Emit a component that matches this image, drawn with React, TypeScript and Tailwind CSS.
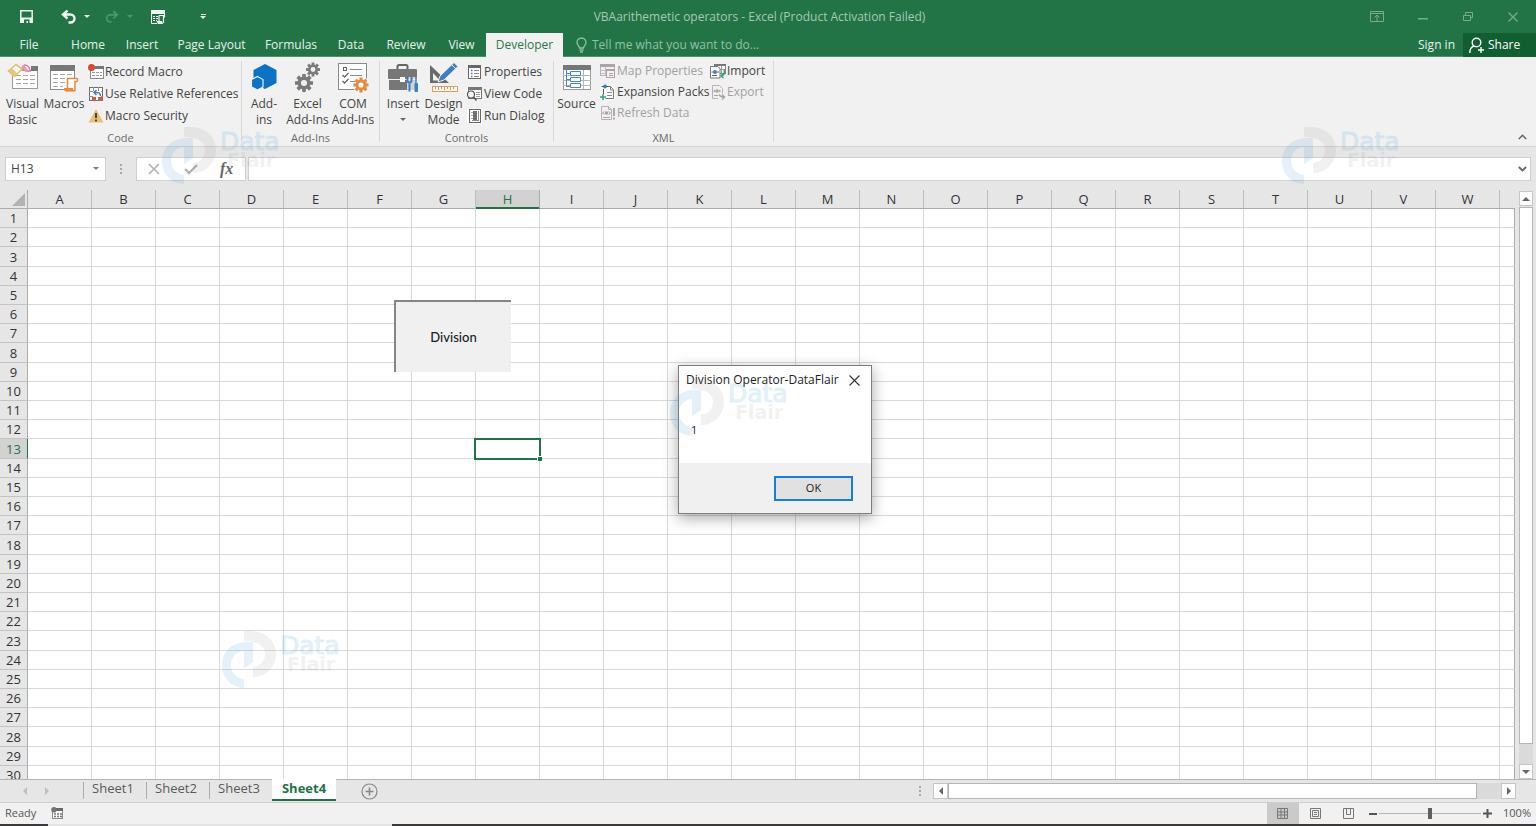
import { useState, type ReactNode } from 'react'
import clsx from 'clsx'

const COLUMNS = 'ABCDEFGHIJKLMNOPQRSTUVW'.split('')
const ROWS = Array.from({ length: 30 }, (_, i) => i + 1)
const SHEETS = ['Sheet1', 'Sheet2', 'Sheet3', 'Sheet4']

const TABS = [
  { name: 'Home', width: 'w-14' },
  { name: 'Insert', width: 'w-[52px]' },
  { name: 'Page Layout', width: 'w-[87px]' },
  { name: 'Formulas', width: 'w-[72px]' },
  { name: 'Data', width: 'w-12' },
  { name: 'Review', width: 'w-[62px]' },
  { name: 'View', width: 'w-[49px]' },
  { name: 'Developer', width: 'w-[77px]' },
]

/* ---------- large ribbon icons (32x32) ---------- */

function Svg32({ children }: { children: ReactNode }) {
  return (
    <svg width="32" height="32" viewBox="0 0 32 32" fill="none" aria-hidden="true">
      {children}
    </svg>
  )
}

function Cog({ cx, cy, r, color, hole }: { cx: number; cy: number; r: number; color: string; hole: string }) {
  return (
    <g transform={`translate(${cx} ${cy})`}>
      {[0, 45, 90, 135].map((a) => (
        <rect key={a} x={-r * 0.2} y={-r} width={r * 0.4} height={r * 2} fill={color} transform={`rotate(${a})`} />
      ))}
      <circle r={r * 0.72} fill={color} />
      <circle r={r * 0.34} fill={hole} />
    </g>
  )
}

const VisualBasicIcon = () => (
  <Svg32>
    <rect x="5.500" y="9.500" width="25" height="18" fill="#fff" stroke="#9a9a9a" />
    <rect x="24" y="5" width="7" height="5" fill="#777" />
    <path d="M9 14.500h5m2 0h5m2 0h5M9 18.500h5m2 0h5m2 0h5M9 22.500h5m2 0h5m2 0h5" stroke="#a8a8a8" />
    <path d="M9 3.500l6 4.500-7.500 7.500-6-5.500z" fill="#fff" stroke="#e5bd6b" strokeWidth="1.600" />
    <path d="M1.500 10l3-3 6 5.500-3 3z" fill="#e9c47a" />
    <path d="M17.500 4c3.500 0 5 2 5.500 6-4 .5-7-1-7.500-4z" fill="#fff" stroke="#e67f9b" strokeWidth="1.600" />
    <path d="M17 4l-2 2.500 5 4.500 1-2z" fill="#ee9ab0" />
  </Svg32>
)

const MacrosIcon = () => (
  <Svg32>
    <rect x="2.500" y="4.500" width="24" height="24" fill="#fff" stroke="#8a8a8a" />
    <rect x="2" y="4" width="25" height="6" fill="#777" />
    <path d="M5 13.500h5m2 0h5m2 0h5M5 17.500h5m2 0h5M5 21.500h5m2 0h5M5 25.500h5m2 0h3" stroke="#a8a8a8" />
    <path d="M19.500 17.500h9c1.500 0 1.500 3 0 3H27v9H18c1.500 0 1.500-1 1.500-3z" fill="#fff" stroke="#e8893e" strokeWidth="1.500" />
    <path d="M16 27h9v1.500c0 1 .5 2 2 2H18c-1.500 0-2-1.500-2-3.500z" fill="#e8893e" />
  </Svg32>
)

const AddInsIcon = () => (
  <Svg32>
    <path d="M17 3l11.500 6v13L17 28 5.500 22V9z" fill="#0b72c5" />
    <path d="M9.500 15.500l5.500 3v7.500l-5.500 3-6-3v-7.500z" fill="#0b72c5" stroke="#f1f1f1" strokeWidth="1.200" />
  </Svg32>
)

const ExcelAddInsIcon = () => (
  <Svg32>
    <Cog cx={21} cy={8.5} r={7} color="#7a7a7a" hole="#f1f1f1" />
    <Cog cx={12} cy={22} r={9} color="#7a7a7a" hole="#f1f1f1" />
  </Svg32>
)

const ComAddInsIcon = () => (
  <Svg32>
    <rect x="1.500" y="2.500" width="28" height="26" fill="#fff" stroke="#8a8a8a" />
    <path d="M13 8.500h12M13 14.500h12M13 20.500h6" stroke="#8a8a8a" />
    <rect x="6.500" y="6.500" width="3" height="3" stroke="#666" />
    <path d="M5.500 14l2 2 4-4M5.500 20l2 2 4-4" stroke="#666" strokeWidth="1.300" />
    <Cog cx={24} cy={24} r={8.5} color="#f1f1f1" hole="#f1f1f1" />
    <Cog cx={24} cy={24} r={7.5} color="#e8893e" hole="#fff" />
  </Svg32>
)

const InsertIcon = () => (
  <Svg32>
    <path d="M10.500 8V5.500q0-1.500 1.500-1.500h7q1.500 0 1.500 1.500V8" stroke="#666" strokeWidth="2" />
    <rect x="1" y="8" width="29" height="10" rx="1" fill="#777" />
    <rect x="2" y="19" width="27" height="10" fill="#777" />
    <rect x="13" y="16" width="5" height="5" fill="#fff" />
    <path d="M20 16h12v15H20z" fill="#f1f1f1" opacity=".75" />
    <path d="M20.500 16v3.500q0 2 2 2t2-2V16M22.500 21v9.500" stroke="#3f7fc0" strokeWidth="2" />
    <path d="M29 16v7" stroke="#3f7fc0" strokeWidth="1.500" />
    <rect x="27.500" y="22" width="3.500" height="9" rx="1" fill="#3f7fc0" />
  </Svg32>
)

const DesignModeIcon = () => (
  <Svg32>
    <path d="M2 4v18h19zM5 12l7 7.500H5z" fill="#6a6a6a" fillRule="evenodd" />
    <path d="M10 21l2-6L26 1.500l4 4L16 19z" fill="#3f7fc0" stroke="#f1f1f1" />
    <path d="M24 4l4 4" stroke="#f1f1f1" />
    <rect x="4.500" y="25.500" width="25" height="5" fill="#fff" stroke="#e59a5e" />
    <path d="M7.500 26v2m3-2v3m3-3v2m3-2v3m3-3v2m3-2v3m3-3v2" stroke="#e59a5e" />
  </Svg32>
)

const SourceIcon = () => (
  <Svg32>
    <rect x="2.500" y="4.500" width="27" height="24" fill="#fff" stroke="#9a9a9a" />
    <path d="M2 14.500h28M2 19.500h28M2 24.500h28M22.500 9v19" stroke="#b5b5b5" />
    <rect x="2" y="4" width="28" height="5" fill="#777" />
    <path d="M5.500 5v20.500H10M5.500 12.500H10M5.500 18.500H10" stroke="#4b86c4" />
    <path d="M9.500 10.500h10v4h-10zM9.500 16.500h10v4h-10zM9.500 22.500h10v4h-10z" fill="#fff" stroke="#4b86c4" />
  </Svg32>
)

/* ---------- small ribbon icons (16x16) ---------- */

function Svg16({ children }: { children: ReactNode }) {
  return (
    <svg width="16" height="16" viewBox="0 0 16 16" fill="none" aria-hidden="true" className="shrink-0">
      {children}
    </svg>
  )
}

const RecordIcon = () => (
  <Svg16>
    <rect x="2.500" y="2.500" width="13" height="12" fill="#fff" stroke="#8a8a8a" />
    <rect x="7" y="2" width="9" height="3" fill="#777" />
    <path d="M4 8.500h3m1 0h3m1 0h2M4 11.500h3m1 0h3m1 0h2" stroke="#9a9a9a" />
    <circle cx="3.500" cy="3.500" r="3.500" fill="#d9482b" />
  </Svg16>
)

const RelativeIcon = () => (
  <Svg16>
    <rect x="1.500" y="1.500" width="13" height="13" fill="#fff" stroke="#6f6f6f" />
    <path d="M1 5.500h14M1 10.500h14M5.500 1v14M10.500 1v14" stroke="#8a8a8a" />
    <rect x="5" y="5" width="8" height="6" fill="#fff" />
    <path d="M12.500 10c0-3-2-4-6-3.500M8.500 4L6 6.500 8.500 9" stroke="#3f7fc0" strokeWidth="1.500" />
    <rect x="4" y="11" width="4" height="4" fill="#d9583c" />
    <rect x="11" y="11" width="4" height="4" fill="#d9583c" />
  </Svg16>
)

const SecurityIcon = () => (
  <Svg16>
    <path d="M8 1l7.500 13.500H.5z" fill="#eabf74" />
    <path d="M8 5v5M8 11.500v2" stroke="#444" strokeWidth="2" />
  </Svg16>
)

const PropertiesIcon = () => (
  <Svg16>
    <rect x="1.500" y="1.500" width="12" height="13" fill="#fff" stroke="#666" />
    <rect x="1" y="1" width="13" height="3" fill="#666" />
    <path d="M4 6.500h1.500M4 9.500h1.500M4 12.500h1.500" stroke="#3f7fc0" strokeWidth="1.500" />
    <path d="M7 6.500h5M7 9.500h5M7 12.500h5" stroke="#8a8a8a" />
  </Svg16>
)

const ViewCodeIcon = () => (
  <Svg16>
    <rect x="1.500" y="1.500" width="13" height="11" fill="#fff" stroke="#777" />
    <rect x="1" y="1" width="14" height="3" fill="#777" />
    <path d="M9 6.500h4M9 8.500h4M9 10.500h4" stroke="#9a9a9a" />
    <circle cx="4" cy="8.500" r="3.500" fill="#f6f6f6" stroke="#555" strokeWidth="1.200" />
    <path d="M6.500 11l3 3.500" stroke="#555" strokeWidth="1.500" />
  </Svg16>
)

const RunDialogIcon = () => (
  <Svg16>
    <rect width="15" height="16" fill="#fff" />
    <rect x="2.500" y="1.500" width="11" height="13" fill="#fff" stroke="#666" />
    <path d="M4 4.500h3M4 7.500h2M4 10.500h2" stroke="#aaa" />
    <rect x="6" y="3" width="4" height="9" fill="#6f6f6f" />
    <path d="M5 12.500h7M11.500 3v9" stroke="#8a8a8a" />
  </Svg16>
)

const MapPropertiesIcon = () => (
  <Svg16>
    <rect x=".5" y="1.500" width="14" height="11" fill="#f5eff4" stroke="#b9b1b7" />
    <rect y="1" width="15" height="3" fill="#aaa4a8" />
    <path d="M1 7.500h6M1 10.500h6M5.500 4v8" stroke="#c5bdc3" />
    <rect x="6.500" y="6.500" width="8" height="8" fill="#f5eff4" stroke="#aaa4a8" />
    <path d="M6 7.500h9M9 10.500h4M9 12.500h4" stroke="#aaa4a8" />
  </Svg16>
)

const ExpansionIcon = () => (
  <Svg16>
    <rect width="15" height="16" fill="#fbfbfb" />
    <path d="M4.500 2.500h6l3 3v9h-8" stroke="#777" />
    <path d="M10.500 2v4h3M7 8.500h5M7 11.500h5" stroke="#8a8a8a" />
    <circle cx="5" cy="2.500" r="2" fill="#3f7fc0" />
    <path d="M1.500 2.500h2M6.500 2.500h3M3.500 5v5" stroke="#555" />
    <path d="M3 10v6M0 13h6" stroke="#35a278" strokeWidth="1.500" />
  </Svg16>
)

const RefreshIcon = () => (
  <Svg16>
    <path d="M1.500 1.500h7l3 3v10h-10z" fill="#f5eff4" stroke="#b9b1b7" />
    <path d="M8.500 1.500v3h3" stroke="#b9b1b7" />
    <circle cx="6.500" cy="8" r="1.800" fill="#aaa4a8" />
    <path d="M2.500 8l2-1.500M2.500 8l2 1.500M10.500 8l-2-1.500M10.500 8l-2 1.500M3 12.500h7" stroke="#aaa4a8" />
    <path d="M14 3v8M14 12.500v2" stroke="#a5a5a5" strokeWidth="1.800" />
  </Svg16>
)

const ImportIcon = () => (
  <Svg16>
    <rect x="4.500" y="1.500" width="11" height="9" fill="#fff" stroke="#8a8a8a" />
    <rect x="4" y="1" width="12" height="2" fill="#777" />
    <path d="M11.500 2v8M8 6.500h7" stroke="#9a9a9a" />
    <path d="M.5 3.500h7l2.500 2v9.500H.5z" fill="#fff" stroke="#777" />
    <circle cx="5" cy="9" r="2" fill="#3f7fc0" />
    <path d="M1.500 9h2M7 9h2M2 12.500h5" stroke="#666" />
    <path d="M14 7c1 3 0 5-2.500 6M13.500 10.500L11 13l2.500 2" stroke="#35a278" strokeWidth="1.500" />
  </Svg16>
)

const ExportIcon = () => (
  <Svg16>
    <path d="M2.500 1.500h7l3 3v5M8 14.500H2.500v-13" fill="#f5eff4" stroke="#b9b1b7" />
    <circle cx="7" cy="7" r="1.800" fill="#aaa4a8" />
    <path d="M3.500 7l1.500-1M3.500 7L5 8M10.500 7L9 6M10.500 7L9 8M4 11.500h4" stroke="#aaa4a8" />
    <path d="M9 10.500q1 2.500 5 2.500M12 10.500l2.500 2.500-2.500 2.500" stroke="#a5a5a5" strokeWidth="1.500" />
  </Svg16>
)

/* ---------- ribbon pieces ---------- */

function BigButton({ icon, label, width, menu }: { icon: ReactNode; label: ReactNode; width: string; menu?: boolean }) {
  return (
    <button className={clsx('flex flex-col items-center pt-1 text-center leading-4 whitespace-nowrap', width)}>
      {icon}
      <span className="mt-[3px]">{label}</span>
      {menu && <span className="mt-1.5 border-x-[3px] border-t-[3px] border-x-transparent border-t-[#666]" />}
    </button>
  )
}

function SmallButton({ icon, label, off, short }: { icon: ReactNode; label: string; off?: boolean; short?: boolean }) {
  return (
    <button
      disabled={off}
      className={clsx('flex items-center gap-px whitespace-nowrap', short ? 'h-[21px]' : 'h-[22px]', off && 'text-[#a3a0a2]')}
    >
      {icon}
      {label}
    </button>
  )
}

function Group({ name, width, children }: { name: string; width: string; children: ReactNode }) {
  return (
    <section className={clsx('flex shrink-0 flex-col', width)} aria-label={name}>
      <div className="flex h-[73px] items-start">{children}</div>
      <div className="text-center text-[11px] leading-4 text-[#6b6b6b]">{name}</div>
    </section>
  )
}

const Separator = () => <div className="my-1 w-px shrink-0 bg-[#d8d8d8]" />

function TitleBar() {
  return (
    <header className="flex h-[33px] items-center text-[#a4cab3]">
      <div className="flex flex-1 items-center text-[#f0f6f2]">
        <button aria-label="Save" className="ml-5">
          <svg width="13" height="13" viewBox="0 0 13 13" fill="none">
            <path d="M.8.8h11.400v11.400H.8z" stroke="currentColor" strokeWidth="1.500" />
            <path d="M1 7.500h11v5H1z" fill="currentColor" />
            <path d="M4 9.500h5.500V13H8v-2H6.500v2H4z" fill="#227447" />
          </svg>
        </button>
        <button aria-label="Undo" className="ml-7">
          <svg width="17" height="14" viewBox="0 0 17 14" fill="none">
            <path d="M2 4.500h7.500a4 4 0 0 1 0 8H7.500M6.500.5l-4.500 4 4.500 4" stroke="currentColor" strokeWidth="2.400" />
          </svg>
        </button>
        <span className="ml-1.5 border-x-[3px] border-t-[3px] border-x-transparent border-t-[#f0f6f2]" />
        <button aria-label="Redo" disabled className="ml-3.5 text-[#4e9470]">
          <svg width="15" height="14" viewBox="0 0 17 14" fill="none">
            <path d="M15 4.500H7a4 4 0 0 0 0 8h1.500M10.500.5l4.500 4-4.500 4" stroke="currentColor" strokeWidth="2" />
          </svg>
        </button>
        <span className="ml-2 border-x-[3px] border-t-[3px] border-x-transparent border-t-[#4e9470]" />
        <button aria-label="Form" className="ml-[18px]">
          <svg width="15" height="14" viewBox="0 0 15 14" fill="none">
            <path d="M.5 1v12.500H6M13.500 1v4" stroke="currentColor" />
            <path d="M0 0h14v4H0z" fill="currentColor" />
            <path d="M2 6.500h2M2 8.500h2M2 10.500h2M5 6.500h2M5 8.500h2M5 10.500h1" stroke="currentColor" />
            <path d="M8 5.500h5.500v2M8 5.500v6M12.500 6v7" stroke="currentColor" strokeWidth="1.200" />
            <path d="M5.500 11h5.500l1 3H7z" fill="currentColor" />
          </svg>
        </button>
        <button aria-label="Customize toolbar" className="ml-[34px] flex flex-col items-center gap-px">
          <span className="h-px w-[5px] bg-[#e0ece5]" />
          <span className="border-x-[3px] border-t-[3px] border-x-transparent border-t-[#e0ece5]" />
        </button>
      </div>
      <h1 className="whitespace-nowrap">VBAarithemetic operators - Excel (Product Activation Failed)</h1>
      <div className="flex flex-1 items-center justify-end gap-[33px] pr-[17px] text-[#76ad8d]">
        <button aria-label="Ribbon display options">
          <svg width="14" height="11" viewBox="0 0 14 11" fill="none" stroke="currentColor">
            <path d="M.5.5h13v10H.5zM.5 2.500h13M7 10V4.500M4.500 6.500L7 4l2.500 2.500" />
          </svg>
        </button>
        <button aria-label="Minimize" className="pt-1">
          <svg width="12" height="2" viewBox="0 0 12 2" fill="currentColor">
            <path d="M1 0h10v1.500H1z" />
          </svg>
        </button>
        <button aria-label="Restore">
          <svg width="12" height="11" viewBox="0 0 12 11" fill="none" stroke="currentColor">
            <path d="M1.500 4.500h7v5h-7zM3.500 4V1.500h7v5H9" />
          </svg>
        </button>
        <button aria-label="Close">
          <svg width="12" height="10" viewBox="0 0 12 10" fill="none" stroke="currentColor" strokeWidth="1.300">
            <path d="M1.500.5l9 9m0-9l-9 9" />
          </svg>
        </button>
      </div>
    </header>
  )
}

function TabBar() {
  return (
    <nav className="flex h-6 items-stretch border-b border-[#4d9069] text-[#e6f1ea]">
      <button className="w-[60px] pr-0.5">File</button>
      {TABS.map((t) => (
        <button
          key={t.name}
          className={clsx(
            'shrink-0 whitespace-nowrap',
            t.width,
            t.name === 'Developer' && '-mb-px bg-[#f1f1f1] text-[#267a4b]',
          )}
        >
          {t.name}
        </button>
      ))}
      <label className="ml-3 flex flex-1 items-center gap-1 text-[#94c0a6]">
        <svg width="13" height="16" viewBox="0 0 13 16" fill="none" stroke="currentColor" strokeWidth="1.300" aria-hidden="true">
          <path d="M4.500 11c0-2-2.500-3-2.500-5.500a4.500 4.500 0 0 1 9 0C11 8 8.500 9 8.500 11zM4.500 13h4M5 15h3" />
        </svg>
        <input
          aria-label="Tell me what you want to do"
          placeholder="Tell me what you want to do..."
          className="w-52 bg-transparent outline-none placeholder:text-[#94c0a6]"
        />
      </label>
      <button className="mr-2 whitespace-nowrap">Sign in</button>
      <button className="-mb-px flex w-[73px] items-center gap-1 bg-[#115e31] pl-1.5 text-white">
        <svg width="15" height="17" viewBox="0 0 15 17" fill="none" stroke="currentColor" strokeWidth="1.400" aria-hidden="true">
          <circle cx="7.500" cy="5.500" r="4.300" />
          <path d="M.8 16c0-4 2-6.500 4.500-7M12 10v6M9 13h6" />
        </svg>
        Share
      </button>
    </nav>
  )
}

function Ribbon() {
  return (
    <div className="flex h-[90px] shrink-0 border-b border-[#d2d2d2] bg-[#f1f1f1] text-[#444]">
      <Group name="Code" width="w-[241px]">
        <BigButton icon={<VisualBasicIcon />} label={<>Visual<br />Basic</>} width="w-[45px]" />
        <BigButton icon={<MacrosIcon />} label="Macros" width="w-[38px]" />
        <div className="flex flex-col pt-1 pl-[5px]">
          <SmallButton icon={<RecordIcon />} label="Record Macro" />
          <SmallButton icon={<RelativeIcon />} label="Use Relative References" />
          <SmallButton icon={<SecurityIcon />} label="Macro Security" />
        </div>
      </Group>
      <Separator />
      <Group name="Add-Ins" width="w-[137px]">
        <BigButton icon={<AddInsIcon />} label={<>Add-<br />ins</>} width="w-11" />
        <BigButton icon={<ExcelAddInsIcon />} label={<>Excel<br />Add-Ins</>} width="w-[43px]" />
        <BigButton icon={<ComAddInsIcon />} label={<>COM<br />Add-Ins</>} width="w-12" />
      </Group>
      <Separator />
      <Group name="Controls" width="w-[173px]">
        <BigButton icon={<InsertIcon />} label="Insert" width="w-[46px]" menu />
        <BigButton icon={<DesignModeIcon />} label={<>Design<br />Mode</>} width="w-[35px]" />
        <div className="flex flex-col pt-1 pl-1.5">
          <SmallButton icon={<PropertiesIcon />} label="Properties" />
          <SmallButton icon={<ViewCodeIcon />} label="View Code" />
          <SmallButton icon={<RunDialogIcon />} label="Run Dialog" />
        </div>
      </Group>
      <Separator />
      <Group name="XML" width="w-[219px]">
        <BigButton icon={<SourceIcon />} label="Source" width="w-[45px]" />
        <div className="flex w-[111px] flex-col pt-[3px] pl-px">
          <SmallButton icon={<MapPropertiesIcon />} label="Map Properties" off short />
          <SmallButton icon={<ExpansionIcon />} label="Expansion Packs" short />
          <SmallButton icon={<RefreshIcon />} label="Refresh Data" off short />
        </div>
        <div className="flex flex-col pt-[3px]">
          <SmallButton icon={<ImportIcon />} label="Import" short />
          <SmallButton icon={<ExportIcon />} label="Export" off short />
        </div>
      </Group>
      <Separator />
      <div className="flex flex-1 items-end justify-end pr-[9px] pb-1.5">
        <button aria-label="Collapse the ribbon">
          <svg width="9" height="6" viewBox="0 0 9 6" fill="none" stroke="#666" strokeWidth="1.600">
            <path d="M.8 5l3.700-3.700L8.200 5" />
          </svg>
        </button>
      </div>
    </div>
  )
}

function FormulaBar() {
  return (
    <div className="flex h-[43px] shrink-0 items-center px-[5px] text-[#444]">
      <div className="flex h-6 w-[101px] items-center border border-[#cfcfcf] bg-white pr-1.5">
        <input aria-label="Name Box" defaultValue="H13" className="min-w-0 flex-1 pl-[5px] outline-none" />
        <span className="border-x-[3px] border-t-[3px] border-x-transparent border-t-[#777]" />
      </div>
      <div className="ml-3.5 flex w-4 flex-col gap-0.5">
        <span className="size-0.5 bg-[#a8a8a8]" />
        <span className="size-0.5 bg-[#a8a8a8]" />
        <span className="size-0.5 bg-[#a8a8a8]" />
      </div>
      <div className="flex h-6 w-[110px] items-center border border-[#cfcfcf] bg-white pl-[11px]">
        <button aria-label="Cancel">
          <svg width="12" height="12" viewBox="0 0 12 12" fill="none" stroke="#b2b2b2" strokeWidth="1.600">
            <path d="M1 1l10 10M11 1L1 11" />
          </svg>
        </button>
        <button aria-label="Enter" className="ml-6">
          <svg width="14" height="12" viewBox="0 0 14 12" fill="none" stroke="#b2b2b2" strokeWidth="2.400">
            <path d="M1 6l4 4 8-8" />
          </svg>
        </button>
        <button aria-label="Insert Function" className="ml-[22px] font-['Liberation_Serif',serif] text-base leading-5 font-bold text-[#666] italic">
          fx
        </button>
      </div>
      <div className="ml-0.5 flex h-6 flex-1 items-center border border-[#cfcfcf] bg-white pr-[3px]">
        <input aria-label="Formula" className="min-w-0 flex-1 px-1 outline-none" />
        <svg width="9" height="6" viewBox="0 0 9 6" fill="none" stroke="#666" strokeWidth="1.800" aria-hidden="true">
          <path d="M.8 1l3.700 3.500L8.200 1" />
        </svg>
      </div>
    </div>
  )
}

function Grid() {
  return (
    <table className="w-full table-fixed border-separate border-spacing-0 text-center text-[13px] text-[#333]">
      <colgroup>
        <col className="w-7" />
        {COLUMNS.map((c) => (
          <col key={c} className="w-16" />
        ))}
        <col />
      </colgroup>
      <thead>
        <tr className="h-[19px]">
          <th className="border-r border-b border-[#ababab] p-0">
            <svg width="13" height="13" viewBox="0 0 13 13" className="ml-3" aria-hidden="true">
              <path d="M13 0v13H0z" fill="#b2b2b2" />
            </svg>
          </th>
          {COLUMNS.map((c) => (
            <th
              key={c}
              scope="col"
              className={clsx(
                'border-r border-b p-0 leading-[18px] font-normal',
                c === 'H'
                  ? 'border-r-[#ababab] border-b-[#217346] bg-[#d2d2d2] text-[#217346] shadow-[inset_0_-1px_#217346]'
                  : 'border-r-[#bdbdbd] border-b-[#ababab]',
              )}
            >
              {c}
            </th>
          ))}
          <th className="border-b border-[#ababab] p-0" />
        </tr>
      </thead>
      <tbody>
        {ROWS.map((r) => (
          <tr key={r} className={r % 5 === 3 ? 'h-5' : 'h-[19px]'}>
            <th
              scope="row"
              className={clsx(
                'border-r border-b border-b-[#c4c4c4] p-0 leading-[18px] font-normal',
                r === 13 ? 'border-r-[#217346] bg-[#d2d2d2] text-[#217346]' : 'border-r-[#ababab]',
              )}
            >
              {r}
            </th>
            {COLUMNS.map((c) => (
              <td key={c} className="border-r border-b border-[#d9d9d9] bg-white p-0" />
            ))}
            <td className="border-r border-b border-r-[#ababab] border-b-[#d9d9d9] bg-white p-0" />
          </tr>
        ))}
      </tbody>
    </table>
  )
}

function MessageBox({ onClose }: { onClose: () => void }) {
  return (
    <div
      role="dialog"
      aria-labelledby="msg-title"
      className="absolute top-[175px] left-[678px] flex h-[149px] w-[194px] flex-col border border-[#7d7d7d] bg-white text-[#222] shadow-[0_4px_14px_rgba(0,0,0,0.35)]"
    >
      <div className="flex h-7 items-center justify-between pr-[11px] pl-[7px]">
        <h2 id="msg-title" className="whitespace-nowrap">Division Operator-DataFlair</h2>
        <button aria-label="Close" onClick={onClose}>
          <svg width="11" height="11" viewBox="0 0 11 11" fill="none" stroke="#333" strokeWidth="1.100">
            <path d="M.5.5l10 10m0-10l-10 10" />
          </svg>
        </button>
      </div>
      <p className="flex-1 px-3 pt-7 text-[11px] leading-4">1</p>
      <div className="flex h-[50px] items-center justify-end bg-[#f0f0f0] pr-[18px]">
        <button onClick={onClose} className="h-[25px] w-[79px] border-2 border-[#1a7fd4] bg-[#e1e1e1] text-[11px]">
          OK
        </button>
      </div>
    </div>
  )
}

const arrowBox = 'flex shrink-0 items-center justify-center border border-[#c6c6c6] bg-white'

function VerticalScroll() {
  return (
    <div className="flex w-[21px] shrink-0 flex-col pt-px pr-[3px] pl-1">
      <button aria-label="Scroll up" className={clsx(arrowBox, 'h-[15px]')}>
        <span className="border-x-4 border-b-4 border-x-transparent border-b-[#666]" />
      </button>
      <div className="mt-px flex-1 bg-[#dadada] pb-5">
        <div className="h-full border border-[#b5b5b5] bg-white" />
      </div>
      <button aria-label="Scroll down" className={clsx(arrowBox, 'h-[15px]')}>
        <span className="border-x-4 border-t-4 border-x-transparent border-t-[#666]" />
      </button>
    </div>
  )
}

function SheetBar() {
  return (
    <div className="flex h-[23px] shrink-0 items-start border-t border-[#b5b5b5]">
      <div className="flex h-[22px] w-[83px] shrink-0 items-center gap-[18px] pl-[23px]">
        <button aria-label="Previous sheet" className="border-y-4 border-r-4 border-y-transparent border-r-[#bdbdbd]" />
        <button aria-label="Next sheet" className="border-y-4 border-l-4 border-y-transparent border-l-[#bdbdbd]" />
      </div>
      {SHEETS.map((s) => (
        <button
          key={s}
          className={clsx(
            'shrink-0 text-[13px]',
            s === 'Sheet4'
              ? '-mt-px h-[22px] w-16 border-b-2 border-[#217346] bg-white pb-0.5 leading-[18px] font-bold text-[#217346]'
              : 'mt-0.5 h-[17px] w-[63px] border-l border-[#ababab] pr-1 pb-1 leading-[13px] text-[#5a5a5a]',
          )}
        >
          {s}
        </button>
      ))}
      <button aria-label="New sheet" className="mt-[3px] ml-[25px]">
        <svg width="17" height="17" viewBox="0 0 17 17" fill="none" stroke="#888">
          <circle cx="8.500" cy="8.500" r="7.500" strokeWidth="1.200" />
          <path d="M8.500 4.500v8M4.500 8.500h8" strokeWidth="1.600" />
        </svg>
      </button>
      <div className="ml-auto flex items-center pt-[3px] pr-5">
        <div className="mr-3 flex flex-col gap-0.5">
          <span className="size-0.5 bg-[#a8a8a8]" />
          <span className="size-0.5 bg-[#a8a8a8]" />
          <span className="size-0.5 bg-[#a8a8a8]" />
        </div>
        <button aria-label="Scroll left" className={clsx(arrowBox, 'h-4 w-[15px]')}>
          <span className="border-y-4 border-r-4 border-y-transparent border-r-[#666]" />
        </button>
        <div className="h-4 w-[36vw] bg-[#dadada] pr-6">
          <div className="h-full border border-[#b5b5b5] bg-white" />
        </div>
        <button aria-label="Scroll right" className={clsx(arrowBox, 'h-4 w-[15px]')}>
          <span className="border-y-4 border-l-4 border-y-transparent border-l-[#666]" />
        </button>
      </div>
    </div>
  )
}

function StatusBar() {
  const [zoom, setZoom] = useState(100)
  return (
    <footer className="flex h-[22px] shrink-0 items-center border-t border-[#cfcfcf] bg-[#f1f1f1] text-[11px] text-[#555]">
      <span className="w-[51px] pl-[5px]">Ready</span>
      <svg width="13" height="13" viewBox="0 0 13 13" fill="none" aria-label="Macro recording">
        <rect x="1.500" y="2.500" width="10" height="9" fill="#fff" stroke="#888" />
        <path d="M5 1h7v3H5z" fill="#666" />
        <circle cx="3" cy="2.800" r="2.800" fill="#777" />
        <path d="M3 7h2m1 0h2m1 0h2M3 9.500h2m1 0h2m1 0h2" stroke="#777" strokeWidth="1.300" />
      </svg>
      <div className="ml-auto flex h-full items-center pr-[5px]">
        <button aria-label="Normal view" className="flex h-full w-8 items-center justify-center bg-[#cacaca]">
          <svg width="12" height="11" viewBox="0 0 12 11" fill="none" stroke="#777">
            <path d="M.5.5h10v10H.5zM.5 4h10M.5 7h10M4 .5v10M7.500.5v10" />
          </svg>
        </button>
        <button aria-label="Page layout view" className="flex w-[33px] justify-center">
          <svg width="11" height="11" viewBox="0 0 11 11" fill="none" stroke="#777">
            <path d="M.5.5h10v10H.5zM2.500 2.500h6v6h-6zM4 4.500h3M4 6.500h3" />
          </svg>
        </button>
        <button aria-label="Page break preview" className="flex w-8 justify-center">
          <svg width="11" height="11" viewBox="0 0 11 11" fill="none" stroke="#777">
            <path d="M.5.5h10v10H.5zM3.500.5v6h4v-6" />
          </svg>
        </button>
        <button aria-label="Zoom out" onClick={() => setZoom(zoom - 10)} className="ml-[3px] flex w-3 justify-center">
          <svg width="8" height="8" viewBox="0 0 8 8" stroke="#555" strokeWidth="2">
            <path d="M0 4h8" />
          </svg>
        </button>
        <input
          type="range"
          aria-label="Zoom"
          min={10}
          max={190}
          value={zoom}
          onChange={(e) => setZoom(Number(e.target.value))}
          className="h-3 w-[102px] appearance-none bg-[linear-gradient(#b5b5b5,#b5b5b5)] bg-[length:100%_1px] bg-center bg-no-repeat [&::-webkit-slider-thumb]:h-[11px] [&::-webkit-slider-thumb]:w-1 [&::-webkit-slider-thumb]:appearance-none [&::-webkit-slider-thumb]:bg-[#5f5f5f]"
        />
        <button aria-label="Zoom in" onClick={() => setZoom(zoom + 10)} className="flex w-3 justify-center">
          <svg width="9" height="9" viewBox="0 0 9 9" stroke="#555" strokeWidth="2">
            <path d="M0 4.500h9M4.500 0v9" />
          </svg>
        </button>
        <output className="ml-2.5">{zoom}%</output>
      </div>
    </footer>
  )
}

function Watermark({ className }: { className: string }) {
  return (
    <svg
      width="124"
      height="60"
      viewBox="0 0 124 60"
      className={clsx('pointer-events-none absolute', className)}
      aria-hidden="true"
    >
      <path d="M22 0h6c16 0 26 10 26 23S44 46 31 46V36c8-1 12-6 12-13 0-8-7-13-21-13z" fill="#8c8c8c" opacity=".12" />
      <path d="M31 11v20l-9 6V20C13 21 9 27 9 34s5 13 13 14v9C8 56 0 46 0 34 0 20 11 11 25 11z" fill="#3f9fd8" opacity=".14" />
      <g className="font-['DejaVu_Sans',sans-serif]">
        <text x="58" y="23" fontSize="25" fill="#3f9fd8" stroke="#3f9fd8" strokeWidth="1" opacity=".15">Data</text>
        <text x="65" y="40" fontSize="19" fontWeight="bold" fill="#8c8c8c" opacity=".11">Flair</text>
      </g>
    </svg>
  )
}

export default function App() {
  const [open, setOpen] = useState(true)

  return (
    <div className="relative flex h-screen flex-col overflow-hidden bg-[#e6e6e6] font-['Open_Sans','Noto_Sans',sans-serif] text-[12px]">
      <div className="shrink-0 bg-[#227447]">
        <TitleBar />
        <TabBar />
      </div>
      <Ribbon />
      <FormulaBar />

      <main className="relative flex min-h-0 flex-1">
        <div className="min-w-0 flex-1 overflow-hidden">
          <Grid />
        </div>
        <VerticalScroll />

        {/* selected cell */}
        <div className="absolute top-[248px] left-[474px] h-[22px] w-[67px] border-2 border-[#217346]">
          <span className="absolute -right-[3px] -bottom-[3px] size-[5px] border-t border-l border-white bg-[#217346]" />
        </div>
        <button
          onClick={() => setOpen(true)}
          className="absolute top-[110px] left-[394px] h-[72px] w-[117px] border-t-2 border-l-2 border-[#858585] bg-[#f0f0f0] pt-0.5 font-['Lato',sans-serif] text-[13px] font-medium text-[#222]"
        >
          Division
        </button>
        {open && <MessageBox onClose={() => setOpen(false)} />}
      </main>

      <SheetBar />
      <StatusBar />
      {/* top edge of the taskbar */}
      <div className="flex h-0.5 shrink-0">
        <div className="w-12 bg-[#3c3a38]" />
        <div className="w-[344px] bg-[#e4e4e4]" />
        <div className="flex-1 bg-[#3c3a38]" />
      </div>

      <Watermark className="top-[127px] left-[162px]" />
      <Watermark className="top-[127px] right-[130px]" />
      <Watermark className="top-[379px] left-[670px]" />
      <Watermark className="top-[631px] left-[222px]" />
    </div>
  )
}
